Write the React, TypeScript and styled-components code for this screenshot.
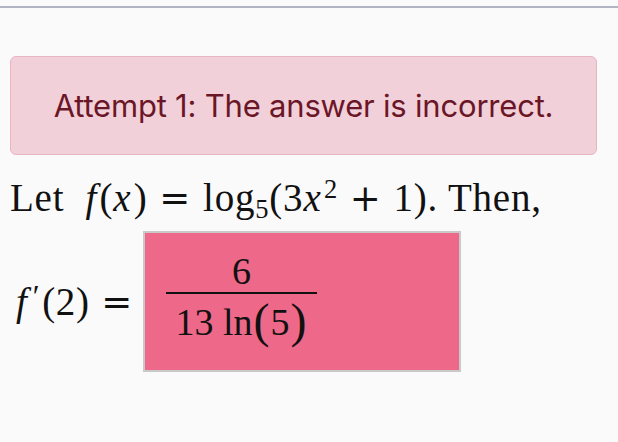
import React from 'react';
import styled, { createGlobalStyle } from 'styled-components';

const GlobalStyle = createGlobalStyle`
  html, body {
    margin: 0;
    padding: 0;
    background: #fafafa;
  }
`;

const Page = styled.div`
  width: 618px;
  min-height: 442px;
  background: #fafafa;
  padding-top: 6px;
  box-sizing: border-box;
`;

const TopRule = styled.div`
  height: 2px;
  background: #b1b4c1;
`;

const Content = styled.div`
  padding: 0 21px 0 10px;
`;

const Alert = styled.div`
  margin-top: 48px;
  height: 99px;
  box-sizing: border-box;
  background: #f1d0d9;
  border: 1.5px solid #e9b5c5;
  border-radius: 6px;
  display: flex;
  align-items: center;
  justify-content: center;
  font-family: Inter, 'Liberation Sans', sans-serif;
  font-size: 31px;
  letter-spacing: -0.2px;
  color: #6b1627;
`;

const Statement = styled.div`
  margin-top: 21px;
  font-family: 'Liberation Serif', serif;
  font-size: 39px;
  line-height: 44px;
  letter-spacing: 0.8px;
  color: #111;
  white-space: nowrap;
`;

const Var = styled.i`
  font-style: italic;
  padding-right: 0.06em;
`;

const Sub = styled.span`
  font-size: 0.68em;
  vertical-align: -0.25em;
  line-height: 0;
`;

const Sup = styled.span`
  font-size: 0.68em;
  vertical-align: 0.48em;
  line-height: 0;
`;

const Op = styled.span`
  font-family: 'DejaVu Serif', serif;
  font-size: 0.95em;
  margin: 0 0.32em;
`;

const AnswerRow = styled.div`
  margin-top: 10px;
  display: flex;
  align-items: center;
`;

const Lhs = styled.div`
  width: 133px;
  padding-left: 6px;
  box-sizing: border-box;
  font-family: 'Liberation Serif', serif;
  font-size: 39px;
  letter-spacing: 0.6px;
  color: #111;
  white-space: nowrap;
`;

const Prime = styled.span`
  display: inline-block;
  font-size: 0.8em;
  vertical-align: 0.25em;
  margin: 0 2px 0 3px;
  line-height: 0;
`;

const AnswerBox = styled.div`
  width: 318px;
  height: 141px;
  box-sizing: border-box;
  background: #ed6889;
  border: 2px solid #c9c9c9;
  padding: 18px 0 0 21px;
  display: flex;
  align-items: flex-start;
`;

const Fraction = styled.div`
  display: inline-flex;
  flex-direction: column;
  align-items: center;
  width: 151px;
  font-family: 'Liberation Serif', serif;
  font-size: 38px;
  color: #111;
`;

const Numerator = styled.div`
  line-height: 40px;
  padding-bottom: 1px;
`;

const Bar = styled.div`
  width: 100%;
  height: 2px;
  background: #111;
`;

const Denominator = styled.div`
  line-height: 44px;
  padding-top: 6px;
  white-space: nowrap;
`;

const Paren = styled.span`
  font-size: 48px;
  line-height: 0;
  vertical-align: -2px;
  margin: 0 1px;
`;

export default function App() {
  return (
    <>
      <GlobalStyle />
      <Page>
        <TopRule />
        <Content>
          <Alert>Attempt 1: The answer is incorrect.</Alert>
          <Statement>
            Let&nbsp;&nbsp;<Var>f</Var>(<Var>x</Var>)<Op>=</Op>log<Sub>5</Sub>(3<Var>x</Var>
            <Sup>2</Sup>
            <Op>+</Op>1). Then,
          </Statement>
          <AnswerRow>
            <Lhs>
              <Var>f</Var>
              <Prime>′</Prime>(2)<Op>=</Op>
            </Lhs>
            <AnswerBox>
              <Fraction>
                <Numerator>6</Numerator>
                <Bar />
                <Denominator>
                  13&nbsp;ln<Paren>(</Paren>5<Paren>)</Paren>
                </Denominator>
              </Fraction>
            </AnswerBox>
          </AnswerRow>
        </Content>
      </Page>
    </>
  );
}
